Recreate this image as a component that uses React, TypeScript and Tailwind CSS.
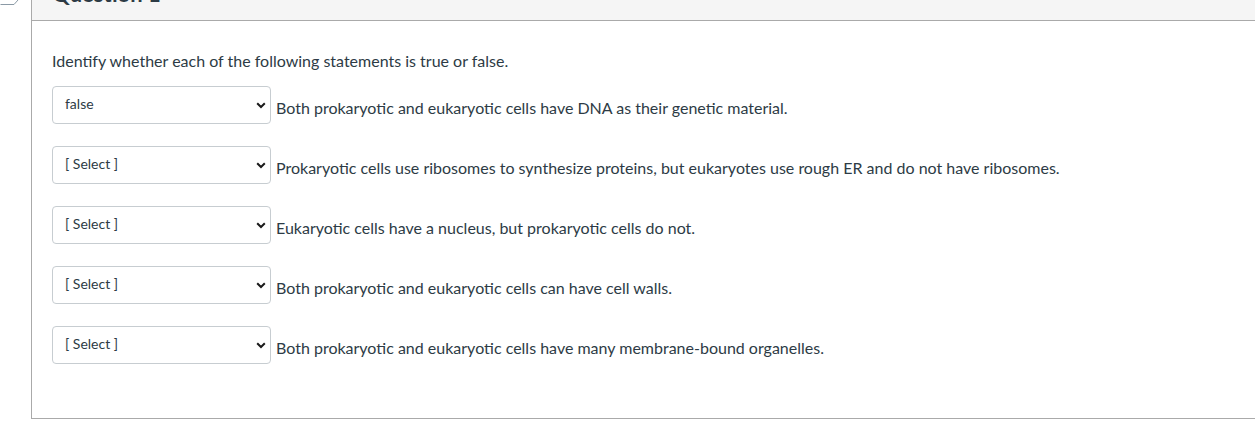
import React from "react";

const rows = [
  { value: "false", text: "Both prokaryotic and eukaryotic cells have DNA as their genetic material." },
  { value: "[ Select ]", text: "Prokaryotic cells use ribosomes to synthesize proteins, but eukaryotes use rough ER and do not have ribosomes." },
  { value: "[ Select ]", text: "Eukaryotic cells have a nucleus, but prokaryotic cells do not." },
  { value: "[ Select ]", text: "Both prokaryotic and eukaryotic cells can have cell walls." },
  { value: "[ Select ]", text: "Both prokaryotic and eukaryotic cells have many membrane-bound organelles." },
];

function Chevron() {
  return (
    <svg width="10" height="7" viewBox="0 0 10 7" className="shrink-0">
      <path d="M1.2 1.2 L5 5 L8.8 1.2" fill="none" stroke="#1b1b1b" strokeWidth="2" />
    </svg>
  );
}

export default function App() {
  return (
    <div className="w-[1255px] h-[439px] bg-white overflow-hidden relative text-[#2d3b45]" style={{ fontFamily: "Lato, 'Noto Sans', sans-serif" }}>
      <div className="absolute left-0 top-[-14px]">
        <svg width="20" height="20" viewBox="0 0 20 20">
          <path d="M0.5 1 H18 V14 L14 18.5 H0.5" fill="none" stroke="#8b9aa6" strokeWidth="1" />
        </svg>
      </div>
      <div className="ml-[31px] w-[1260px] h-[419px] border-l border-b border-[#aaaaaa] flex flex-col">
        <div className="h-[21px] bg-[#f5f5f5] border-b border-[#aaaaaa] overflow-hidden relative">
          <div className="absolute left-[20px] top-[-19px] text-[22px] font-bold leading-[26px] text-[#2d3b45]">Question 1</div>
        </div>
        <div className="pl-[20px] pt-[30px]">
          <div className="text-[16px] leading-[20px]">Identify whether each of the following statements is true or false.</div>
          <div className="mt-[15px] flex flex-col gap-[22px]">
            {rows.map((r, i) => (
              <div key={i} className="flex items-start">
                <div className="w-[219px] h-[38px] border border-[#c7cdd1] rounded-[4px] flex items-start justify-between pl-[12px] pr-[4px] pt-[8px] bg-white">
                  <span className="text-[14px] leading-[18px] text-[#2d3b45]">{r.value}</span>
                  <span className="mt-[7px]"><Chevron /></span>
                </div>
                <div className="ml-[5px] pt-[12px] text-[16px] leading-[20px]">{r.text}</div>
              </div>
            ))}
          </div>
        </div>
      </div>
    </div>
  );
}
